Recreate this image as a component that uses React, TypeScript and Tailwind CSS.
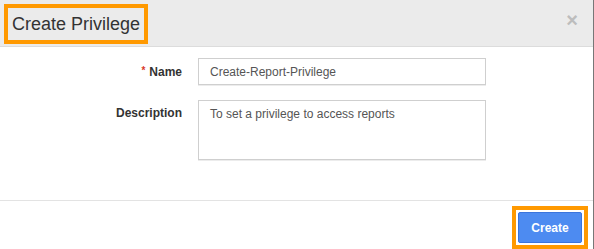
const font = { fontFamily: '"Liberation Sans", Arial, sans-serif' };

export default function App() {
  return (
    <div className="h-[249px] w-[594px] bg-white" style={font}>
      <div className="flex h-[249px] w-[594px] flex-col border-r border-[#777]">
        {/* header */}
        <div className="flex h-[47px] items-start justify-between border-b border-[#dcdcdc] bg-[#ebebeb]">
          <div className="ml-[4px] mt-[4px] flex h-[40px] w-[144px] items-center border-4 border-[#ff9900] pl-[4px]">
            <h1 className="text-[18px] leading-none text-[#333]">Create Privilege</h1>
          </div>
          <button className="mr-[15px] mt-[10px] text-[20px] font-bold leading-none text-[#bdbdbd]">×</button>
        </div>

        {/* body */}
        <div className="flex h-[153px] flex-col gap-[15px] pt-[11px]">
          <div className="flex items-center">
            <label className="w-[182px] text-right text-[12px] font-bold text-[#333]">
              <span className="mr-[4px] align-top text-[10px] text-[#d9382a]">*</span>Name
            </label>
            <div className="ml-[16px] flex h-[27px] w-[288px] items-center border border-[#cfcfcf] px-[11px] text-[12px] text-[#555] shadow-[0_1px_0_#ececec]">
              Create-Report-Privilege
            </div>
          </div>
          <div className="flex items-start">
            <label className="w-[182px] pt-[4px] text-right text-[12px] font-bold text-[#333]">Description</label>
            <div className="ml-[16px] h-[60px] w-[288px] border border-[#cfcfcf] px-[11px] pt-[4px] text-[12px] text-[#555] shadow-[0_1px_0_#ececec]">
              To set a privilege to access reports
            </div>
          </div>
        </div>

        {/* footer */}
        <div className="flex flex-1 justify-end border-t border-[#e3e3e3] pr-[5px] pt-[5px]">
          <div className="flex h-[43px] w-[76px] items-center justify-center border-4 border-[#ff9900] bg-white">
            <button className="h-[31px] w-[64px] rounded-[2px] border border-[#3a74dc] bg-[#4d8bf1] text-[12px] font-bold text-white">
              Create
            </button>
          </div>
        </div>
      </div>
    </div>
  );
}
